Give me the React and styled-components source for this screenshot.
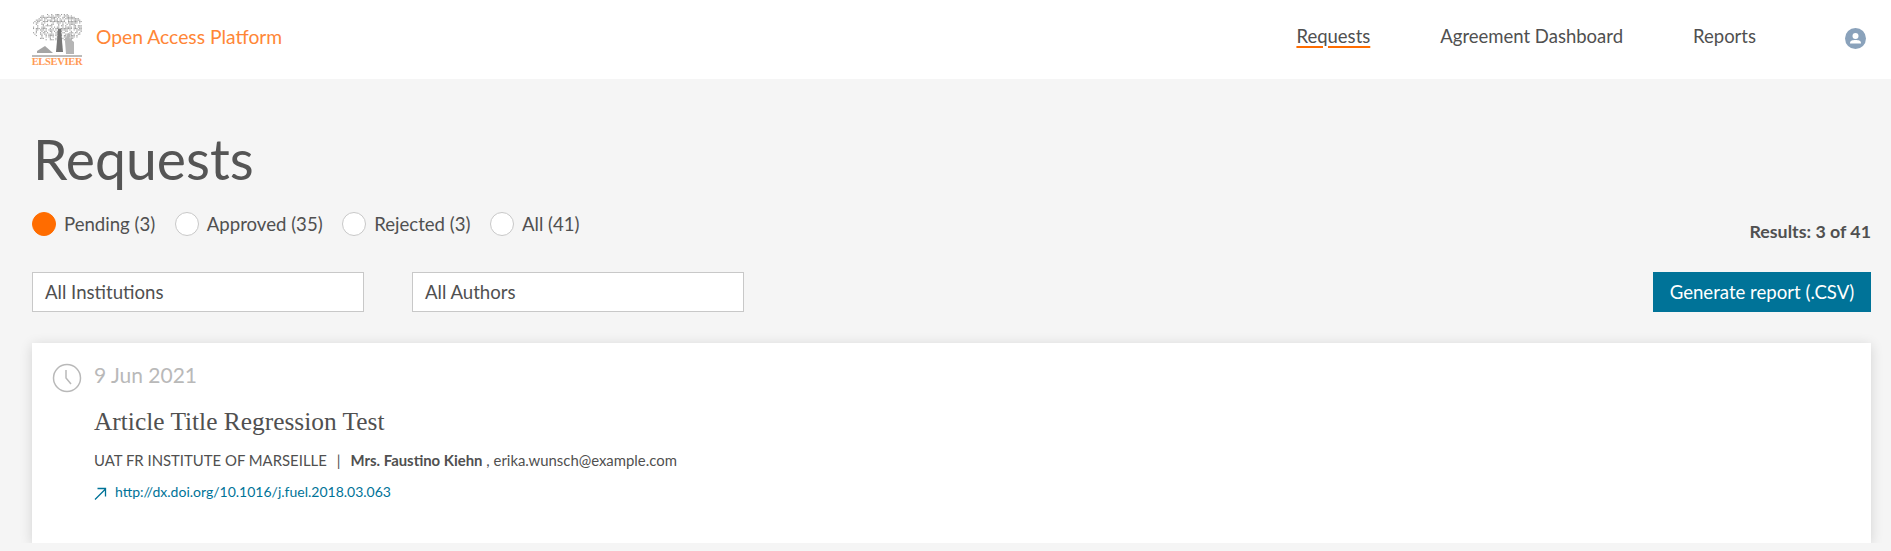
import React from 'react';
import styled, { createGlobalStyle } from 'styled-components';

const SANS = '"Lato", "Noto Sans", sans-serif';

const GlobalStyle = createGlobalStyle`
  html, body {
    margin: 0;
    padding: 0;
    background: #f5f5f5;
    font-family: ${SANS};
    color: #505050;
    overflow: hidden;
  }
`;

const Header = styled.header`
  display: flex;
  align-items: center;
  justify-content: space-between;
  height: 79px;
  background: #fff;
  padding: 0 25px 0 32px;
`;

const Brand = styled.div`
  display: flex;
  align-items: center;
  gap: 14px;
`;

const LogoWrap = styled.div`
  display: flex;
  flex-direction: column;
  align-items: center;
  width: 50px;
  margin-top: 1px;
`;

const LogoWord = styled.span`
  font-family: "Liberation Serif", serif;
  font-size: 10.5px;
  line-height: 10px;
  font-weight: 700;
  color: #ff9a55;
  letter-spacing: -0.3px;
`;

const BrandName = styled.span`
  font-size: 19.3px;
  color: #ff8636;
  margin-bottom: 7px;
`;

const Nav = styled.nav`
  display: flex;
  align-items: center;
  gap: 70px;
  margin-bottom: 3px;
`;

const NavLink = styled.a`
  font-size: 18.5px;
  color: #505050;
  margin-bottom: 5px;
  text-decoration: ${(p) => (p.$active ? 'underline' : 'none')};
  text-decoration-color: #ff6c00;
  text-decoration-thickness: 2px;
  text-underline-offset: 3px;
`;

const Avatar = styled.svg`
  width: 21px;
  height: 21px;
  margin-left: 19px;
`;

const Main = styled.main`
  padding: 44px 20px 0 32px;
`;

const Title = styled.h1`
  margin: 0 0 0 1px;
  font-size: 55.3px;
  line-height: 72px;
  font-weight: 400;
  color: #555;
`;

const FilterBar = styled.div`
  display: flex;
  align-items: center;
  justify-content: space-between;
  margin-top: 11px;
`;

const Radios = styled.div`
  display: flex;
  align-items: center;
  gap: 19.5px;
`;

const Radio = styled.label`
  display: flex;
  align-items: center;
  gap: 8px;
  font-size: 18.6px;
  color: #505050;
`;

const Dot = styled.span`
  width: 22px;
  height: 22px;
  border-radius: 50%;
  background: ${(p) => (p.$on ? '#ff6c00' : '#fff')};
  border: 1px solid ${(p) => (p.$on ? '#ff6c00' : '#c8c8c8')};
`;

const Results = styled.span`
  font-size: 17.8px;
  font-weight: 700;
  color: #505050;
  margin-top: 14px;
`;

const Controls = styled.div`
  display: flex;
  align-items: center;
  margin-top: 30px;
`;

const Select = styled.div`
  box-sizing: border-box;
  width: 332px;
  height: 40px;
  margin-right: 48px;
  padding: 0 12px;
  display: flex;
  align-items: center;
  background: #fff;
  border: 1px solid #c8c8c8;
  font-size: 18.6px;
  color: #505050;
`;

const GenerateButton = styled.button`
  margin-left: auto;
  width: 218px;
  height: 40px;
  border: 0;
  background: #007398;
  color: #fff;
  font-family: ${SANS};
  font-size: 18.6px;
`;

const Card = styled.article`
  display: flex;
  gap: 12px;
  box-sizing: border-box;
  height: 200px;
  margin-top: 31px;
  padding: 19px 20px;
  background: #fff;
  box-shadow: 0 2px 12px rgba(0, 0, 0, 0.14);
`;

const ClockIcon = styled.svg`
  flex: none;
  width: 30px;
  height: 30px;
  margin-top: 1px;
`;

const CardBody = styled.div`
  display: flex;
  flex-direction: column;
`;

const DateLine = styled.div`
  font-size: 21px;
  line-height: 26px;
  color: #b9b9b9;
`;

const ArticleTitle = styled.h2`
  margin: 19px 0 0;
  font-family: "Liberation Serif", serif;
  font-weight: 400;
  font-size: 25.4px;
  line-height: 28px;
  color: #505050;
`;

const Meta = styled.div`
  margin-top: 15px;
  font-size: 14.9px;
  line-height: 20px;
  color: #505050;
`;

const Sep = styled.span`
  margin: 0 10px;
`;

const DoiLink = styled.a`
  display: flex;
  align-items: center;
  gap: 8px;
  margin-top: 12px;
  font-size: 14px;
  line-height: 20px;
  color: #007398;
`;

const ArrowIcon = styled.svg`
  width: 13px;
  height: 13px;
  margin-top: 3px;
`;

// dots that give the tree its engraved look
const leafDots = () => {
  const dots = [];
  for (let y = 1; y < 27; y += 1.4) {
    for (let x = 1; x < 50; x += 1.4) {
      const dx = (x - 25) / 25;
      const dy = (y - 14) / 14;
      const n = Math.sin(x * 12.9 + y * 78.2) * 43758.5;
      if (dx * dx + dy * dy < 1.1 && n - Math.floor(n) > 0.38) dots.push([x, y]);
    }
  }
  return dots;
};

const ElsevierLogo = () => (
  <LogoWrap>
    <svg width="50" height="44" viewBox="0 0 50 44">
      <g fill="#9a9a9a">
        {leafDots().map(([x, y]) => (
          <rect key={`${x}-${y}`} x={x} y={y} width="1.1" height="1.1" />
        ))}
      </g>
      <path d="M26 16 L24 39 L31 39 L29 16Z" fill="#777" />
      <path d="M36 20 C39 20 39 24 37 25 L42 29 L42 41 L34 41 L33 28Z" fill="#b5b5b5" />
      <path d="M5 38 L13 33 L21 40 L5 40Z" fill="#a5a5a5" />
      <path d="M0 43 H50" stroke="#777" strokeWidth="1" />
    </svg>
    <LogoWord>ELSEVIER</LogoWord>
  </LogoWrap>
);

const FILTERS = [
  { label: 'Pending (3)', on: true },
  { label: 'Approved (35)' },
  { label: 'Rejected (3)' },
  { label: 'All (41)' },
];

export default function App() {
  return (
    <>
      <GlobalStyle />
      <Header>
        <Brand>
          <ElsevierLogo />
          <BrandName>Open Access Platform</BrandName>
        </Brand>
        <Nav>
          <NavLink $active>Requests</NavLink>
          <NavLink>Agreement Dashboard</NavLink>
          <NavLink>Reports</NavLink>
          <Avatar viewBox="0 0 21 21">
            <circle cx="10.5" cy="10.5" r="10.5" fill="#8aa2bb" />
            <circle cx="10.5" cy="8" r="3" fill="#fff" />
            <path d="M5 15.5 C5 12.5 7 12 10.5 12 C14 12 16 12.5 16 15.5Z" fill="#fff" />
          </Avatar>
        </Nav>
      </Header>
      <Main>
        <Title>Requests</Title>
        <FilterBar>
          <Radios>
            {FILTERS.map((f) => (
              <Radio key={f.label}>
                <Dot $on={f.on} />
                {f.label}
              </Radio>
            ))}
          </Radios>
          <Results>Results: 3 of 41</Results>
        </FilterBar>
        <Controls>
          <Select>All Institutions</Select>
          <Select>All Authors</Select>
          <GenerateButton>Generate report (.CSV)</GenerateButton>
        </Controls>
        <Card>
          <ClockIcon viewBox="0 0 30 30" fill="none" stroke="#b9b9b9" strokeWidth="1.5">
            <circle cx="15" cy="15" r="13.5" />
            <path d="M14 7 L14 15 L19 21" />
          </ClockIcon>
          <CardBody>
            <DateLine>9 Jun 2021</DateLine>
            <ArticleTitle>Article Title Regression Test</ArticleTitle>
            <Meta>
              UAT FR INSTITUTE OF MARSEILLE<Sep>|</Sep>
              <b>Mrs. Faustino Kiehn</b> , erika.wunsch@example.com
            </Meta>
            <DoiLink>
              <ArrowIcon viewBox="0 0 13 13" fill="none" stroke="#007398" strokeWidth="1.3">
                <path d="M1 12.5 L11.5 2 M3.5 1.5 H11.5 V9.5" />
              </ArrowIcon>
              http://dx.doi.org/10.1016/j.fuel.2018.03.063
            </DoiLink>
          </CardBody>
        </Card>
      </Main>
    </>
  );
}
